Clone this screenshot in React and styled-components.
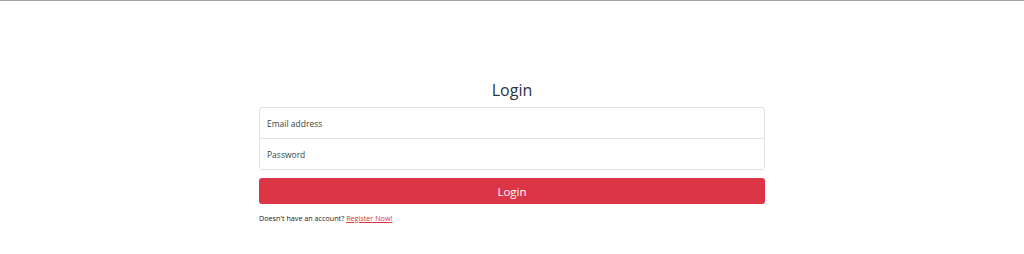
import React from "react";
import styled, { createGlobalStyle } from "styled-components";

const GlobalStyle = createGlobalStyle`
  html, body {
    margin: 0;
    padding: 0;
    background: #ffffff;
    font-family: "Open Sans", "Noto Sans", sans-serif;
  }
`;

const Page = styled.div`
  width: 1024px;
  height: 254px;
  border-top: 1px solid #a3a3a3;
  box-sizing: border-box;
  display: flex;
  justify-content: center;
`;

const Form = styled.form`
  width: 506px;
  margin-top: 80px;
  display: flex;
  flex-direction: column;
`;

const Title = styled.h2`
  margin: 0 0 8px;
  text-align: center;
  font-size: 16px;
  font-weight: 400;
  line-height: 18px;
  color: #2a3440;
`;

const FieldGroup = styled.div`
  display: flex;
  flex-direction: column;
`;

const Input = styled.input`
  height: 32px;
  box-sizing: border-box;
  border: 1px solid #dee2e6;
  padding: 0 7px;
  font-family: inherit;
  font-size: 8.5px;
  color: #212529;
  outline: none;
  border-radius: ${({ $position }) =>
    $position === "top" ? "3px 3px 0 0" : "0 0 3px 3px"};
  margin-top: ${({ $position }) => ($position === "top" ? "0" : "-1px")};

  &::placeholder {
    color: #3a3f44;
  }
`;

const SubmitButton = styled.button`
  margin-top: 8px;
  height: 26px;
  border: none;
  border-radius: 3px;
  background: #dc3545;
  color: #ffffff;
  font-family: inherit;
  font-size: 11.5px;
  cursor: pointer;
`;

const Footer = styled.p`
  margin: 9px 0 0;
  font-size: 7.2px;
  color: #212529;
`;

const RegisterLink = styled.a`
  color: #dc3545;
  text-decoration: underline;
`;

export default function App() {
  return (
    <>
      <GlobalStyle />
      <Page>
        <Form onSubmit={(e) => e.preventDefault()}>
          <Title>Login</Title>
          <FieldGroup>
            <Input $position="top" type="email" placeholder="Email address" />
            <Input $position="bottom" type="password" placeholder="Password" />
          </FieldGroup>
          <SubmitButton type="submit">Login</SubmitButton>
          <Footer>
            Doesn't have an account? <RegisterLink href="#">Register Now!</RegisterLink>
          </Footer>
        </Form>
      </Page>
    </>
  );
}
